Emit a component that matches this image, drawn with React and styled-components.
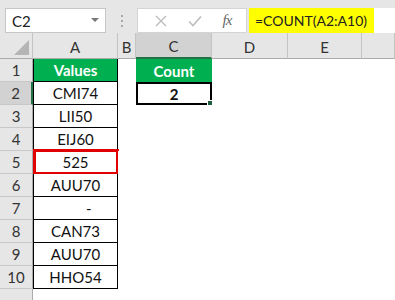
import React from "react";
import styled, { createGlobalStyle, css } from "styled-components";

const GlobalStyle = createGlobalStyle`
  html, body {
    margin: 0;
    padding: 0;
    background: #fff;
  }
  body {
    font-family: Lato, "Open Sans", sans-serif;
    width: 395px;
    height: 300px;
    overflow: hidden;
  }
`;

const Window = styled.div`
  width: 395px;
  height: 300px;
  overflow: hidden;
  display: flex;
  flex-direction: column;
`;

const Toolbar = styled.div`
  height: 40px;
  background: #e6e6e6;
  display: flex;
  align-items: flex-start;
  padding-top: 8px;
  box-sizing: border-box;
`;

const NameBox = styled.div`
  margin-left: 5px;
  width: 101px;
  height: 25px;
  box-sizing: border-box;
  background: #fff;
  border: 1px solid #c6c6c6;
  display: flex;
  align-items: center;
  justify-content: space-between;
  padding: 0 6px 0 6px;
  font-size: 15px;
  color: #222;
`;

const Dots = styled.div`
  width: 31px;
  height: 25px;
  display: flex;
  flex-direction: column;
  align-items: center;
  justify-content: center;
  gap: 3px;

  span {
    width: 2px;
    height: 2px;
    background: #a8a8a8;
  }
`;

const FxBox = styled.div`
  width: 110px;
  height: 25px;
  box-sizing: border-box;
  background: #fff;
  border: 1px solid #d4d4d4;
  display: flex;
  align-items: center;
  justify-content: space-around;
  padding: 0 4px 0 6px;
`;

const FxLabel = styled.span`
  font-family: "Liberation Serif", serif;
  font-style: italic;
  font-size: 15px;
  color: #666;
  letter-spacing: -1px;
`;

const FormulaInput = styled.div`
  margin-left: 2px;
  flex: 1;
  height: 25px;
  background: #fff;
  display: flex;
  align-items: center;
`;

const Highlight = styled.span`
  background: #ffff00;
  height: 25px;
  width: 125px;
  box-sizing: border-box;
  padding-left: 6px;
  display: flex;
  align-items: center;
  font-size: 14px;
  color: #222;
  white-space: nowrap;
`;

const Sheet = styled.div`
  display: grid;
  grid-template-columns: 33px 85px 18px 76px 76px 74px 1fr;
  grid-template-rows: 26px;
  grid-auto-rows: 23px;
  font-size: 15px;
`;

const ColHead = styled.div`
  background: ${p => (p.$selected ? "#d2d2d2" : "#e6e6e6")};
  border-right: 1px solid #c4c4c4;
  border-bottom: ${p => (p.$selected ? "2px solid #217346" : "1px solid #ababab")};
  box-sizing: border-box;
  display: flex;
  align-items: center;
  justify-content: center;
  color: #333;
  padding-top: 2px;
`;

const Corner = styled(ColHead)`
  position: relative;
  svg {
    position: absolute;
    right: 3px;
    bottom: 3px;
  }
`;

const RowHead = styled.div`
  background: ${p => (p.$selected ? "#d2d2d2" : "#e6e6e6")};
  border-bottom: 1px solid #c8c8c8;
  border-right: ${p => (p.$selected ? "2px solid #217346" : "1px solid #ababab")};
  box-sizing: border-box;
  display: flex;
  align-items: center;
  justify-content: center;
  color: #333;
`;

const Cell = styled.div`
  box-sizing: border-box;
  display: flex;
  align-items: center;
  justify-content: center;
  color: #111;
  background: #fff;
  position: relative;

  ${p =>
    p.$boxed &&
    css`
      border-left: 1px solid #000;
      border-right: 1px solid #000;
      border-bottom: 1px solid #000;
    `}

  ${p =>
    p.$header &&
    css`
      background: #00b050;
      color: #fff;
      font-weight: 700;
    `}

  ${p =>
    p.$active &&
    css`
      border: 2px solid #000;
      font-weight: 700;
    `}

  ${p =>
    p.$dash &&
    css`
      justify-content: flex-start;
      padding-left: 52px;
    `}
`;

const RedFrame = styled.div`
  position: absolute;
  left: -1px;
  right: -2px;
  top: -2px;
  bottom: -2px;
  border: 3px solid #e00000;
  pointer-events: none;
`;

const FillHandle = styled.div`
  position: absolute;
  right: -4px;
  bottom: -4px;
  width: 5px;
  height: 5px;
  background: #1e5b3a;
  border: 1px solid #fff;
`;

const values = ["CMI74", "LII50", "EIJ60", "525", "AUU70", "-", "CAN73", "AUU70", "HHO54"];
const cols = ["A", "B", "C", "D", "E", ""];

export default function App() {
  const rows = [];
  for (let r = 1; r <= 11; r++) {
    const val = r === 1 ? "Values" : values[r - 2];
    rows.push(
      <React.Fragment key={r}>
        <RowHead $selected={r === 2}>{r <= 10 ? r : ""}</RowHead>
        {r <= 10 ? (
          <Cell $boxed $header={r === 1} $dash={val === "-"}>
            {val}
            {r === 5 && <RedFrame />}
          </Cell>
        ) : (
          <Cell />
        )}
        <Cell />
        {r === 1 ? (
          <Cell $header>Count</Cell>
        ) : r === 2 ? (
          <Cell $active>
            2
            <FillHandle />
          </Cell>
        ) : (
          <Cell />
        )}
        <Cell />
        <Cell />
        <Cell />
      </React.Fragment>
    );
  }

  return (
    <Window>
      <GlobalStyle />
      <Toolbar>
        <NameBox>
          <span>C2</span>
          <svg width="8" height="5" viewBox="0 0 8 5">
            <polygon points="0,0 8,0 4,4" fill="#777" />
          </svg>
        </NameBox>
        <Dots>
          <span />
          <span />
          <span />
        </Dots>
        <FxBox>
          <svg width="12" height="12" viewBox="0 0 12 12">
            <path d="M1 1 L11 11 M11 1 L1 11" stroke="#bdbdbd" strokeWidth="1.4" fill="none" />
          </svg>
          <svg width="14" height="12" viewBox="0 0 14 12">
            <path d="M1 6.5 L5 10.5 L13 1.5" stroke="#bdbdbd" strokeWidth="1.6" fill="none" />
          </svg>
          <FxLabel>fx</FxLabel>
        </FxBox>
        <FormulaInput>
          <Highlight>=COUNT(A2:A10)</Highlight>
        </FormulaInput>
      </Toolbar>
      <Sheet>
        <Corner>
          <svg width="15" height="15" viewBox="0 0 15 15">
            <polygon points="15,0 15,15 0,15" fill="#b5b5b5" />
          </svg>
        </Corner>
        {cols.map((c, i) => (
          <ColHead key={i} $selected={c === "C"}>
            {c}
          </ColHead>
        ))}
        {rows}
      </Sheet>
    </Window>
  );
}
